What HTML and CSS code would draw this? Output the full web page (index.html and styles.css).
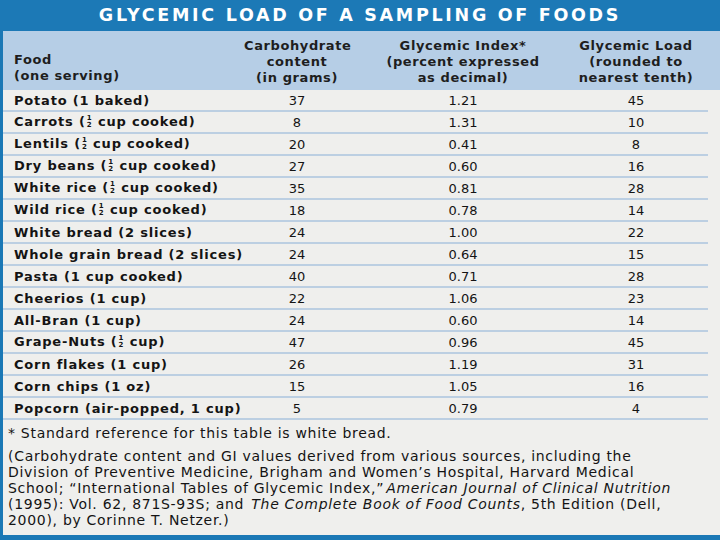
FILE: index.html
```html
<!DOCTYPE html>
<html>
<head>
<meta charset="utf-8">
<link rel="stylesheet" href="styles.css">
</head>
<body>
<div class="page">
  <div class="title">GLYCEMIC LOAD OF A SAMPLING OF FOODS</div>
  <div class="head">
    <div class="h-food">Food<br>(one serving)</div>
    <div class="h-c">Carbohydrate<br>content<br>(in grams)</div>
    <div class="h-c">Glycemic Index*<br>(percent expressed<br>as decimal)</div>
    <div class="h-c">Glycemic Load<br>(rounded to<br>nearest tenth)</div>
  </div>
  <div class="rows">
    <div class="row"><span class="food">Potato (1 baked)</span><span class="n">37</span><span class="n">1.21</span><span class="n">45</span></div>
    <div class="row"><span class="food">Carrots (<span class="fr"><span>1</span><span>2</span></span> cup cooked)</span><span class="n">8</span><span class="n">1.31</span><span class="n">10</span></div>
    <div class="row"><span class="food">Lentils (<span class="fr"><span>1</span><span>2</span></span> cup cooked)</span><span class="n">20</span><span class="n">0.41</span><span class="n">8</span></div>
    <div class="row"><span class="food">Dry beans (<span class="fr"><span>1</span><span>2</span></span> cup cooked)</span><span class="n">27</span><span class="n">0.60</span><span class="n">16</span></div>
    <div class="row"><span class="food">White rice (<span class="fr"><span>1</span><span>2</span></span> cup cooked)</span><span class="n">35</span><span class="n">0.81</span><span class="n">28</span></div>
    <div class="row"><span class="food">Wild rice (<span class="fr"><span>1</span><span>2</span></span> cup cooked)</span><span class="n">18</span><span class="n">0.78</span><span class="n">14</span></div>
    <div class="row"><span class="food">White bread (2 slices)</span><span class="n">24</span><span class="n">1.00</span><span class="n">22</span></div>
    <div class="row"><span class="food">Whole grain bread (2 slices)</span><span class="n">24</span><span class="n">0.64</span><span class="n">15</span></div>
    <div class="row"><span class="food">Pasta (1 cup cooked)</span><span class="n">40</span><span class="n">0.71</span><span class="n">28</span></div>
    <div class="row"><span class="food">Cheerios (1 cup)</span><span class="n">22</span><span class="n">1.06</span><span class="n">23</span></div>
    <div class="row"><span class="food">All-Bran (1 cup)</span><span class="n">24</span><span class="n">0.60</span><span class="n">14</span></div>
    <div class="row"><span class="food">Grape-Nuts (<span class="fr"><span>1</span><span>2</span></span> cup)</span><span class="n">47</span><span class="n">0.96</span><span class="n">45</span></div>
    <div class="row"><span class="food">Corn flakes (1 cup)</span><span class="n">26</span><span class="n">1.19</span><span class="n">31</span></div>
    <div class="row"><span class="food">Corn chips (1 oz)</span><span class="n">15</span><span class="n">1.05</span><span class="n">16</span></div>
    <div class="row"><span class="food">Popcorn (air-popped, 1 cup)</span><span class="n">5</span><span class="n">0.79</span><span class="n">4</span></div>
  </div>
  <div class="notes">
    <p class="star">* Standard reference for this table is white bread.</p>
    <p class="src">(Carbohydrate content and GI values derived from various sources, including the<br>Division of Preventive Medicine, Brigham and Women’s Hospital, Harvard Medical<br>School; “International Tables of Glycemic Index,”<i>American Journal of Clinical Nutrition</i><br>(1995): Vol. 62, 871S-93S; and <i>The Complete Book of Food Counts</i>, 5th Edition (Dell,<br>2000), by Corinne T. Netzer.)</p>
  </div>
  <div class="bottom"></div>
</div>
</body>
</html>
```

FILE: styles.css
```css
html, body {
  margin: 0;
  padding: 0;
}
body {
  width: 720px;
  height: 540px;
  overflow: hidden;
  background: #efefed;
  font-family: "DejaVu Sans", sans-serif;
  color: #141414;
}
.page {
  height: 540px;
  border-left: 3px solid #1b78b5;
  display: flex;
  flex-direction: column;
  box-sizing: border-box;
}
.title {
  height: 31px;
  background: #1c79b6;
  color: #ffffff;
  font-weight: bold;
  font-size: 17.5px;
  letter-spacing: 2.7px;
  line-height: 31px;
  text-align: center;
  margin-left: -3px;
}
.head {
  height: 59px;
  background: #b6cee6;
  display: grid;
  grid-template-columns: 230px 106px 226px 120px;
  padding-left: 11px;
  align-items: center;
  font-weight: bold;
  font-size: 13px;
  line-height: 16px;
  color: #1e1e1e;
  letter-spacing: 0.6px;
}
.h-food {
  padding-top: 14px;
}
.h-c {
  text-align: center;
  padding-top: 2px;
}
.rows {
  width: 705px;
}
.row {
  height: 20px;
  border-bottom: 2px solid #bccfe2;
  display: grid;
  grid-template-columns: 230px 106px 226px 120px;
  padding-left: 11px;
  align-items: center;
}
.food {
  font-weight: bold;
  font-size: 13px;
  letter-spacing: 0.8px;
  white-space: nowrap;
}
.n {
  text-align: center;
  font-size: 13px;
}
.fr {
  display: inline-flex;
  flex-direction: column;
  vertical-align: middle;
  font-size: 7px;
  line-height: 7px;
  letter-spacing: 0;
  margin: 0 1px;
  position: relative;
  top: -1px;
}
.notes {
  flex: 1;
  padding: 5px 0 0 5px;
  font-size: 14px;
  line-height: 16px;
  letter-spacing: 0.7px;
  white-space: nowrap;
}
.notes p {
  margin: 0;
}
.notes i {
  margin-left: 2px;
}
.src {
  margin-top: 7px !important;
}
.bottom {
  height: 5px;
  background: #1b78b5;
  margin-left: -3px;
}
```
